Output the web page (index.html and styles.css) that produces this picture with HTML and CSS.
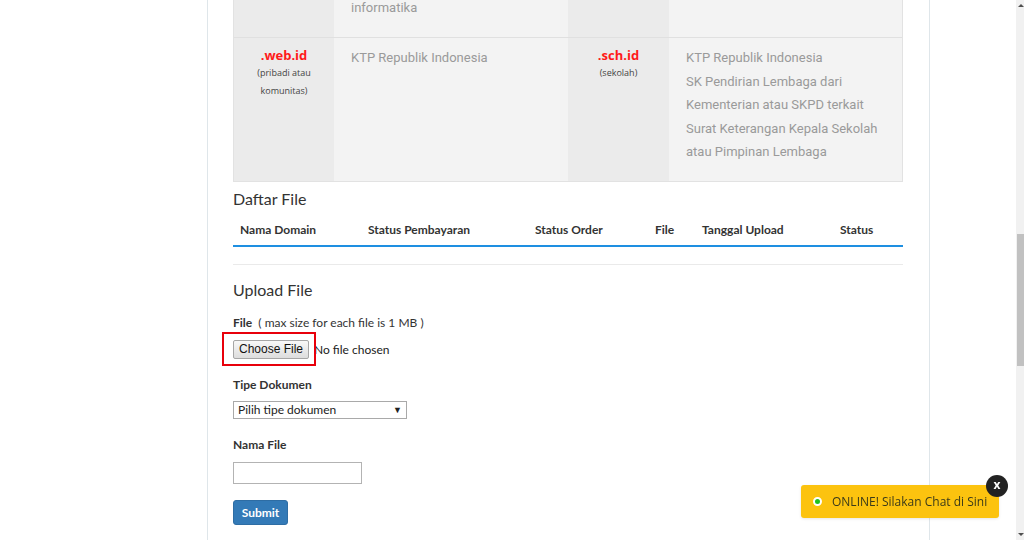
FILE: index.html
```html
<!DOCTYPE html>
<html lang="id">
<head>
    <meta charset="UTF-8">
    <meta name="viewport" content="width=device-width, initial-scale=1.0">
    <title>Upload Dokumen</title>
    <link rel="stylesheet" href="styles.css">
</head>
<body>
    <div class="page">
        <div class="content">
            <!-- syarat dokumen -->
            <div class="req-table">
                <div class="req-row req-row-top">
                    <div class="cell cell-dark"></div>
                    <div class="cell cell-light"><div class="doc-list">informatika</div></div>
                    <div class="cell cell-dark"></div>
                    <div class="cell cell-light"></div>
                </div>
                <div class="req-row">
                    <div class="cell cell-dark cell-domain">
                        <div class="domain-name">.web.id</div>
                        <div class="domain-note">(pribadi atau<br>komunitas)</div>
                    </div>
                    <div class="cell cell-light">
                        <div class="doc-list">KTP Republik Indonesia</div>
                    </div>
                    <div class="cell cell-dark cell-domain">
                        <div class="domain-name">.sch.id</div>
                        <div class="domain-note">(sekolah)</div>
                    </div>
                    <div class="cell cell-light">
                        <div class="doc-list">
                            KTP Republik Indonesia<br>
                            SK Pendirian Lembaga dari<br>
                            Kementerian atau SKPD terkait<br>
                            Surat Keterangan Kepala Sekolah<br>
                            atau Pimpinan Lembaga
                        </div>
                    </div>
                </div>
            </div>

            <h3 class="section-title title-daftar">Daftar File</h3>
            <table class="file-table">
                <thead>
                    <tr>
                        <th class="col-domain">Nama Domain</th>
                        <th class="col-bayar">Status Pembayaran</th>
                        <th class="col-order">Status Order</th>
                        <th class="col-file">File</th>
                        <th class="col-tanggal">Tanggal Upload</th>
                        <th class="col-status">Status</th>
                    </tr>
                </thead>
            </table>
            <hr class="divider">

            <h3 class="section-title title-upload">Upload File</h3>
            <form class="upload-form" onsubmit="return false">
                <label class="form-label label-file"><b>File</b> &nbsp;( max size for each file is 1 MB )</label>
                <div class="file-row">
                    <span class="highlight"></span>
                    <button type="button" class="choose-btn">Choose File</button>
                    <span class="file-status">No file chosen</span>
                </div>

                <label class="form-label label-gap"><b>Tipe Dokumen</b></label>
                <div class="select-box">
                    <span>Pilih tipe dokumen</span>
                    <span class="select-arrow">&#9660;</span>
                </div>

                <label class="form-label label-gap"><b>Nama File</b></label>
                <input type="text" class="text-input">

                <button type="submit" class="submit-btn">Submit</button>
            </form>
        </div>
    </div>

    <!-- chat -->
    <div class="chat-widget">
        <span class="chat-dot"></span>
        <span class="chat-text">ONLINE! Silakan Chat di Sini</span>
        <span class="chat-close">x</span>
    </div>

    <div class="scrollbar">
        <span class="scroll-arrow arrow-up"></span>
        <div class="scroll-thumb"></div>
        <span class="scroll-arrow arrow-down"></span>
    </div>
</body>
</html>
```

FILE: styles.css
```css
* {
    margin: 0;
    padding: 0;
    box-sizing: border-box;
}

body {
    font-family: Lato, "Liberation Sans", Arial, sans-serif;
    font-size: 12px;
    color: #333;
    background: #fff;
    overflow: hidden;
}

.page {
    width: 723px;
    margin-left: 207px;
    min-height: 540px;
    border-left: 1px solid #dfe6ea;
    border-right: 1px solid #dfe6ea;
}

.content {
    padding: 0 26px 0 25px;
}

/* tabel syarat */
.req-table {
    border: 1px solid #e2e2e2;
    border-top: none;
}

.req-row {
    display: grid;
    grid-template-columns: 100px 234px 101px 1fr;
}

.req-row-top {
    height: 38px;
    border-bottom: 1px solid #e0e0e0;
    overflow: hidden;
}

.req-row-top .doc-list {
    margin-top: -4px;
    padding-top: 0;
}

.cell-dark {
    background: #ebebeb;
}

.cell-light {
    background: #f3f3f3;
}

.cell-domain {
    text-align: center;
    padding-top: 8px;
}

.domain-name {
    color: #ff1a1a;
    font-family: "Open Sans", Arial, sans-serif;
    font-weight: bold;
    font-size: 13px;
    line-height: 18px;
}

.domain-note {
    font-family: "Open Sans", Arial, sans-serif;
    font-size: 9px;
    line-height: 18px;
    color: #444;
}

.doc-list {
    font-family: Roboto, Arial, sans-serif;
    font-size: 13px;
    line-height: 23.6px;
    color: #9a9a9a;
    padding: 8px 10px 17px 17px;
}

/* daftar file */
.section-title {
    font-size: 16px;
    font-weight: normal;
    line-height: 20px;
    color: #333;
}

.title-daftar {
    margin-top: 7px;
}

.file-table {
    width: 100%;
    border-collapse: collapse;
    margin-top: 4px;
    table-layout: fixed;
}

.file-table th {
    text-align: left;
    font-weight: bold;
    font-size: 12px;
    line-height: 17px;
    padding: 8px 7px 7px 7px;
    border-bottom: 2px solid #1e8fe1;
    white-space: nowrap;
}

.col-domain { width: 128px; }
.col-bayar { width: 167px; }
.col-order { width: 120px; }
.col-file { width: 47px; }
.col-tanggal { width: 138px; }

.divider {
    border: none;
    border-top: 1px solid #eaeaea;
    margin-top: 17px;
}

.title-upload {
    margin-top: 15px;
}

/* form upload */
.upload-form {
    display: flex;
    flex-direction: column;
    align-items: flex-start;
}

.form-label {
    display: block;
    line-height: 17px;
    margin-top: 14px;
}

.label-gap {
    margin-top: 17px;
}

.file-row {
    position: relative;
    display: flex;
    align-items: center;
    margin-top: 9px;
}

.highlight {
    position: absolute;
    left: -11px;
    top: -8px;
    width: 94px;
    height: 34px;
    border: 2px solid #e8000b;
}

.choose-btn {
    width: 76px;
    height: 19px;
    font-family: "Liberation Sans", Arial, sans-serif;
    font-size: 12px;
    color: #111;
    background: linear-gradient(#f8f8f8, #dddddd);
    border: 1px solid #a6a6a6;
    border-radius: 2px;
}

.file-status {
    margin-left: 5px;
    font-size: 12px;
    color: #222;
}

.select-box {
    display: flex;
    justify-content: space-between;
    align-items: center;
    width: 174px;
    height: 18px;
    margin-top: 8px;
    padding: 0 4px;
    border: 1px solid #a9a9a9;
    font-size: 12px;
    color: #222;
}

.select-arrow {
    font-size: 9px;
    color: #222;
}

.text-input {
    width: 129px;
    height: 22px;
    margin-top: 9px;
    border: 1px solid #b3b3b3;
}

.submit-btn {
    width: 55px;
    height: 25px;
    margin-top: 16px;
    background: #337ab7;
    color: #fff;
    border: 1px solid #2e6da4;
    border-radius: 3px;
    font-family: Lato, Arial, sans-serif;
    font-weight: bold;
    font-size: 12px;
}

/* chat */
.chat-widget {
    position: fixed;
    left: 801px;
    top: 485px;
    width: 198px;
    height: 33px;
    display: flex;
    align-items: center;
    background: #fcc30f;
    border-radius: 3px;
    box-shadow: 0 1px 3px rgba(0, 0, 0, 0.1);
}

.chat-dot {
    width: 9px;
    height: 9px;
    margin-left: 12px;
    border-radius: 50%;
    background: #22c21f;
    border: 2px solid #fff;
}

.chat-text {
    margin-left: 10px;
    font-family: "Open Sans", Arial, sans-serif;
    font-size: 12px;
    color: #3a3a1a;
    white-space: nowrap;
}

.chat-close {
    position: absolute;
    right: -9px;
    top: -10px;
    width: 22px;
    height: 22px;
    border-radius: 50%;
    background: #222;
    color: #fff;
    font-family: "Open Sans", Arial, sans-serif;
    font-weight: bold;
    font-size: 12px;
    line-height: 20px;
    text-align: center;
}

/* scrollbar tiruan */
.scrollbar {
    position: fixed;
    right: 0;
    top: 0;
    width: 8px;
    height: 540px;
    background: #f1f1f1;
}

.scroll-thumb {
    position: absolute;
    left: 1px;
    top: 234px;
    width: 7px;
    height: 132px;
    background: #c1c1c1;
}

.scroll-arrow {
    position: absolute;
    left: 2px;
    width: 0;
    height: 0;
    border-left: 3px solid transparent;
    border-right: 3px solid transparent;
}

.arrow-up {
    top: 4px;
    border-bottom: 3px solid #505050;
}

.arrow-down {
    bottom: 4px;
    border-top: 3px solid #505050;
}
```
